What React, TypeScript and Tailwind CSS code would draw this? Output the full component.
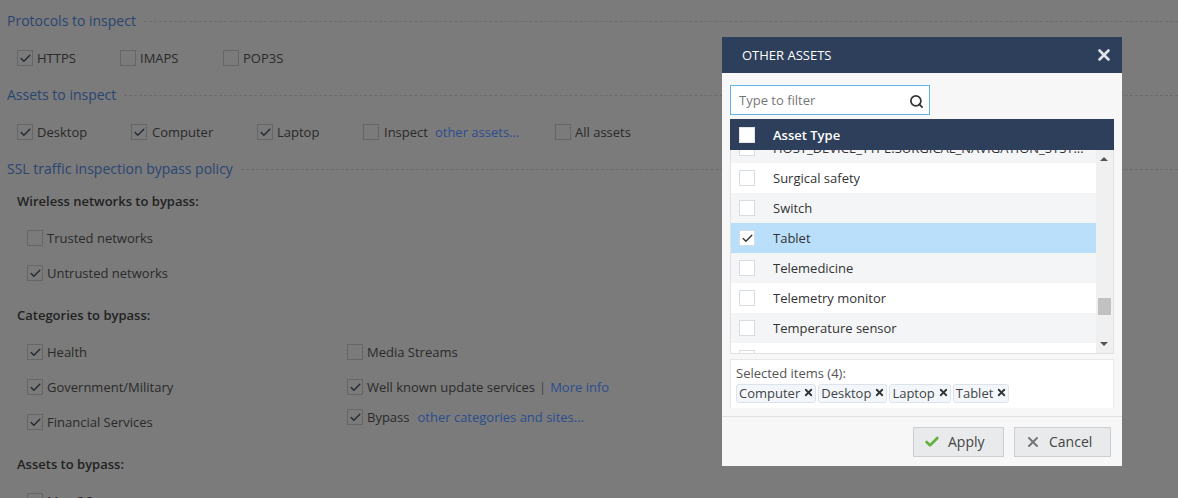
import React from "react";
import { Check, Search, X } from "lucide-react";

const Box = ({ checked = false, className = "" }: { checked?: boolean; className?: string }) => (
  <span className={`flex h-4 w-4 shrink-0 items-center justify-center border border-[#666666] ${className}`}>
    {checked && <Check size={13} strokeWidth={2.5} className="text-[#222a33]" />}
  </span>
);

const Item = ({ label, checked = false, className = "" }: { label: string; checked?: boolean; className?: string }) => (
  <label className={`flex items-center gap-1 ${className}`}>
    <Box checked={checked} />
    <span className="mt-[2px]">{label}</span>
  </label>
);

const Heading = ({ title }: { title: string }) => (
  <div className="flex h-5 items-center gap-2 pl-[7px]">
    <span className="-mt-[2px] text-[14px] text-[#2a4572]">{title}</span>
    <span className="flex-1 border-t border-dashed border-[#6c6c6c]" />
  </div>
);

const SubHeading = ({ title, className = "" }: { title: string; className?: string }) => (
  <div className={`h-5 pl-[17px] font-semibold leading-5 text-[#222222] ${className}`}>{title}</div>
);

const rows = [
  { label: "HOST_DEVICE_TYPE.SURGICAL_NAVIGATION_SYST...", bg: "bg-[#f4f5f6]" },
  { label: "Surgical safety", bg: "bg-white" },
  { label: "Switch", bg: "bg-[#f4f5f6]" },
  { label: "Tablet", bg: "bg-[#b9dffa]", checked: true },
  { label: "Telemedicine", bg: "bg-[#f4f5f6]" },
  { label: "Telemetry monitor", bg: "bg-white" },
  { label: "Temperature sensor", bg: "bg-[#f4f5f6]" },
  { label: "Thermometer", bg: "bg-white" },
];

const Chip = ({ label }: { label: string }) => (
  <span className="flex h-[19px] items-center rounded-[3px] border border-[#dde3ec] bg-[#f3f7fc] pl-[2px] pr-px text-[#444444]">
    {label}
    <X size={11} strokeWidth={4} className="mb-[2px] ml-[3px] text-[#333333]" />
  </span>
);

const OtherAssets = () => (
  <div className="absolute left-[722px] top-[37px] flex h-[429px] w-[400px] flex-col bg-[#f7f7f7]">
    <div className="flex h-9 shrink-0 items-center justify-between bg-[#2d3f5a] pl-5 pr-[9px] text-white">
      <span className="mt-[2px] text-[13px]">OTHER ASSETS</span>
      <X size={18} strokeWidth={3.5} className="text-[#dfe3e8]" />
    </div>

    <div className="ml-2 mt-3 flex h-[30px] w-[200px] items-center justify-between border border-[#5db5ea] bg-white pl-2 pr-[5px]">
      <span className="mt-[2px] text-[#777777]">Type to filter</span>
      <Search size={15} strokeWidth={2.75} className="mt-[2px] text-[#333333]" />
    </div>

    <div className="ml-2 mt-1 flex h-[31px] w-[384px] shrink-0 items-center bg-[#2d3f5a] pl-[9px] font-semibold text-white">
      <span className="h-4 w-4 border border-[#e5e5e5] bg-white" />
      <span className="ml-[18px] mt-[2px]">Asset Type</span>
    </div>

    <div className="ml-2 flex h-[204px] w-[384px] shrink-0 overflow-hidden border-x border-b border-[#e0e2e5] bg-white">
      <div className="min-w-0 flex-1">
        <div className="-mt-[17px]">
          {rows.map((row) => (
            <div key={row.label} className={`flex h-[30px] items-center pl-2 ${row.bg}`}>
              <span className="flex h-4 w-4 shrink-0 items-center justify-center border border-[#d5dde3] bg-white">
                {row.checked && <Check size={13} strokeWidth={2.5} className="text-[#333333]" />}
              </span>
              <span className="ml-[18px] mt-[2px] truncate text-[#333333]">{row.label}</span>
            </div>
          ))}
        </div>
      </div>
      <div className="relative w-[17px] shrink-0 bg-[#f0f0f0]">
        <span className="absolute left-1 top-[7px] h-0 w-0 border-x-[4px] border-b-[4px] border-x-transparent border-b-[#555555]" />
        <span className="absolute left-[2px] top-[148px] h-[17px] w-[13px] bg-[#c1c1c1]" />
        <span className="absolute bottom-[7px] left-1 h-0 w-0 border-x-[4px] border-t-[4px] border-x-transparent border-t-[#555555]" />
      </div>
    </div>

    <div className="ml-2 mt-[5px] h-[49px] w-[384px] shrink-0 border-x border-t border-[#e8e9eb] bg-white pl-[5px] pt-1 text-[#555555]">
      <div className="h-[18px] leading-[18px]">Selected items (4):</div>
      <div className="mt-[2px] flex gap-[2px]">
        <Chip label="Computer" />
        <Chip label="Desktop" />
        <Chip label="Laptop" />
        <Chip label="Tablet" />
      </div>
    </div>

    <div className="mt-2 flex flex-1 justify-end gap-[10px] border-t border-[#dfe1e5] pr-[11px] pt-[10px]">
      <button className="flex h-[30px] w-[91px] items-center border border-[#ccd0d4] bg-[#e8eaec] pl-[10px] text-[14px] text-[#444444]">
        <Check size={16} strokeWidth={4} className="text-[#62b13a]" />
        <span className="-mt-[2px] ml-2">Apply</span>
      </button>
      <button className="flex h-[30px] w-[97px] items-center border border-[#ccd0d4] bg-[#e8eaec] pl-[10px] text-[14px] text-[#444444]">
        <X size={16} strokeWidth={3} className="text-[#777777]" />
        <span className="-mt-[2px] ml-2">Cancel</span>
      </button>
    </div>
  </div>
);

export default function App() {
  return (
    <div className="relative h-[498px] w-[1178px] overflow-hidden bg-[#7b7b7b] font-['Open_Sans',sans-serif] text-[13px] text-[#2a2a2a]">
      <div className="pt-[11px]">
        <Heading title="Protocols to inspect" />
        <div className="mt-[17px] flex h-5 items-center pl-[17px]">
          <Item label="HTTPS" checked className="w-[103px]" />
          <Item label="IMAPS" className="w-[103px]" />
          <Item label="POP3S" />
        </div>

        <div className="mt-[17px]"><Heading title="Assets to inspect" /></div>
        <div className="mt-[17px] flex h-5 items-center pl-[17px]">
          <Item label="Desktop" checked className="w-[114px]" />
          <Item label="Computer" checked className="w-[126px] gap-[5px]" />
          <Item label="Laptop" checked className="w-[106px]" />
          <label className="flex w-[192px] items-center gap-[5px]">
            <Box />
            <span className="mt-[2px]">Inspect</span>
            <span className="ml-[2px] mt-[2px] text-[#2c4d8f]">other assets...</span>
          </label>
          <Item label="All assets" />
        </div>

        <div className="mt-[17px]"><Heading title="SSL traffic inspection bypass policy" /></div>
        <SubHeading title="Wireless networks to bypass:" className="mt-[12px]" />
        <div className="mt-[17px] pl-[27px]">
          <Item label="Trusted networks" className="h-5" />
          <Item label="Untrusted networks" checked className="mt-[15px] h-5" />
        </div>

        <SubHeading title="Categories to bypass:" className="mt-[22px]" />
        <div className="mt-[17px] flex pl-[27px]">
          <div className="w-[320px]">
            <Item label="Health" checked className="h-5" />
            <Item label="Government/Military" checked className="mt-[15px] h-5" />
            <Item label="Financial Services" checked className="mt-[15px] h-5" />
          </div>
          <div>
            <Item label="Media Streams" className="h-5" />
            <label className="mt-[15px] flex h-5 items-center gap-1">
              <Box checked />
              <span className="mt-[2px]">Well known update services</span>
              <span className="mt-[2px] text-[#444444]">|</span>
              <span className="mt-[2px] text-[#2c4d8f]">More info</span>
            </label>
            <label className="mt-[10px] flex h-5 items-center gap-1">
              <Box checked />
              <span className="mt-[2px]">Bypass</span>
              <span className="ml-1 mt-[2px] text-[#2c4d8f]">other categories and sites...</span>
            </label>
          </div>
        </div>

        <SubHeading title="Assets to bypass:" className="mt-[22px]" />
        <div className="mt-[17px] pl-[27px]">
          <Item label="Mac OS" className="h-5" />
        </div>
      </div>
      <OtherAssets />
    </div>
  );
}
